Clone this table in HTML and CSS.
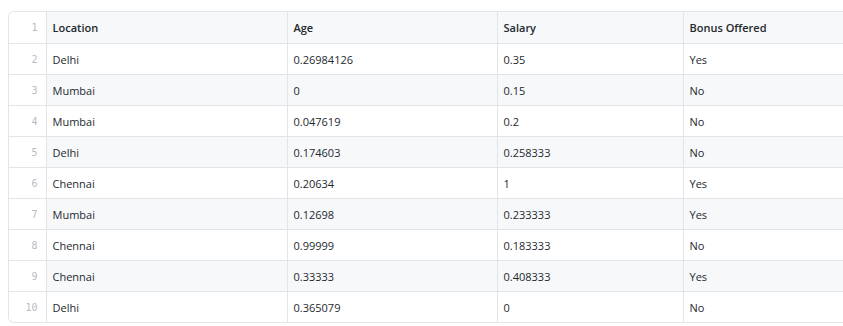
FILE: index.html
```html
<!DOCTYPE html>
<html lang="en">
<head>
    <meta charset="UTF-8">
    <title>data.csv</title>
    <link rel="stylesheet" href="styles.css">
</head>
<body>
    <div class="csv-wrap">
        <table class="csv-table">
            <colgroup>
                <col class="col-num">
                <col class="col-loc">
                <col class="col-age">
                <col class="col-sal">
                <col>
            </colgroup>
            <thead>
                <tr>
                    <th class="line-num">1</th>
                    <th>Location</th>
                    <th>Age</th>
                    <th>Salary</th>
                    <th>Bonus Offered</th>
                </tr>
            </thead>
            <tbody>
                <tr><td class="line-num">2</td><td>Delhi</td><td>0.26984126</td><td>0.35</td><td>Yes</td></tr>
                <tr><td class="line-num">3</td><td>Mumbai</td><td>0</td><td>0.15</td><td>No</td></tr>
                <tr><td class="line-num">4</td><td>Mumbai</td><td>0.047619</td><td>0.2</td><td>No</td></tr>
                <tr><td class="line-num">5</td><td>Delhi</td><td>0.174603</td><td>0.258333</td><td>No</td></tr>
                <tr><td class="line-num">6</td><td>Chennai</td><td>0.20634</td><td>1</td><td>Yes</td></tr>
                <tr><td class="line-num">7</td><td>Mumbai</td><td>0.12698</td><td>0.233333</td><td>Yes</td></tr>
                <tr><td class="line-num">8</td><td>Chennai</td><td>0.99999</td><td>0.183333</td><td>No</td></tr>
                <tr><td class="line-num">9</td><td>Chennai</td><td>0.33333</td><td>0.408333</td><td>Yes</td></tr>
                <tr><td class="line-num">10</td><td>Delhi</td><td>0.365079</td><td>0</td><td>No</td></tr>
            </tbody>
        </table>
    </div>
</body>
</html>
```

FILE: styles.css
```css
body {
    margin: 0;
    padding: 11px 0 0 8px;
    background-color: #fff;
    font-family: "Open Sans", "Noto Sans", sans-serif;
    font-size: 11px;
    color: #24292e;
}
.csv-wrap {
    width: 835px;
    border: 1px solid #e1e4e8;
    border-right: none;
    border-radius: 6px 0 0 6px;
    overflow: hidden;
}
.csv-table {
    width: 100%;
    border-collapse: collapse;
    table-layout: fixed;
}
.col-num { width: 37px; }
.col-loc { width: 241px; }
.col-age { width: 210px; }
.col-sal { width: 186px; }
.csv-table th,
.csv-table td {
    height: 30px;
    padding: 0 6px;
    border: 1px solid #e1e4e8;
    text-align: left;
    white-space: nowrap;
    overflow: hidden;
}
.csv-table thead th {
    height: 31px;
    border-top: none;
    font-weight: 600;
    background-color: #f6f8fa;
}
.csv-table tbody tr:last-child td {
    border-bottom: none;
}
.csv-table th:first-child,
.csv-table td:first-child {
    border-left: none;
}
.csv-table th:last-child,
.csv-table td:last-child {
    border-right: none;
}
.csv-table tbody tr:nth-child(even) {
    background-color: #f6f8fa;
}
.csv-table .line-num {
    padding-right: 8px;
    text-align: right;
    font-family: "DejaVu Sans Mono", monospace;
    font-size: 10px;
    font-weight: 400;
    color: #b8bcc2;
    background-color: #fff;
}
```
